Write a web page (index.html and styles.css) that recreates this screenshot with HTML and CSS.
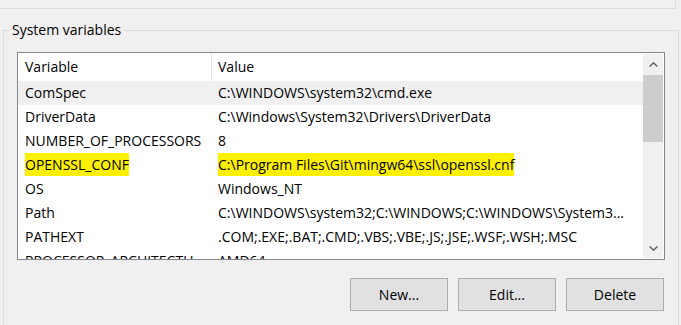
FILE: index.html
```html
<!DOCTYPE html>
<html>
<head>
<meta charset="utf-8">
<link rel="stylesheet" href="styles.css">
</head>
<body>
<div class="prev"></div>
<section class="group">
  <div class="group-title"><span>System variables</span></div>
  <div class="listbox">
    <div class="list">
      <div class="row header"><div class="c1">Variable</div><div class="c2">Value</div></div>
      <div class="row hover"><div class="c1">ComSpec</div><div class="c2">C:\WINDOWS\system32\cmd.exe</div></div>
      <div class="row"><div class="c1">DriverData</div><div class="c2">C:\Windows\System32\Drivers\DriverData</div></div>
      <div class="row"><div class="c1">NUMBER_OF_PROCESSORS</div><div class="c2">8</div></div>
      <div class="row"><div class="c1"><span class="mark mark-a">OPENSSL_CONF</span></div><div class="c2"><span class="mark mark-b">C:\Program Files\Git\mingw64\ssl\openssl.cnf</span></div></div>
      <div class="row"><div class="c1">OS</div><div class="c2">Windows_NT</div></div>
      <div class="row"><div class="c1">Path</div><div class="c2">C:\WINDOWS\system32;C:\WINDOWS;C:\WINDOWS\System3...</div></div>
      <div class="row"><div class="c1">PATHEXT</div><div class="c2">.COM;.EXE;.BAT;.CMD;.VBS;.VBE;.JS;.JSE;.WSF;.WSH;.MSC</div></div>
      <div class="row"><div class="c1">PROCESSOR_ARCHITECTU...</div><div class="c2">AMD64</div></div>
    </div>
    <div class="scrollbar">
      <div class="arrow"><svg width="9" height="5" viewBox="0 0 9 5"><polyline points="0.6,4.6 4.5,0.8 8.4,4.6" fill="none" stroke="#606060" stroke-width="1.4"/></svg></div>
      <div class="thumb"></div>
      <div class="track"></div>
      <div class="arrow"><svg width="9" height="5" viewBox="0 0 9 5"><polyline points="0.6,0.4 4.5,4.2 8.4,0.4" fill="none" stroke="#606060" stroke-width="1.4"/></svg></div>
    </div>
  </div>
  <div class="buttons">
    <button class="btn">New...</button>
    <button class="btn">Edit...</button>
    <button class="btn">Delete</button>
  </div>
</section>
</body>
</html>
```
FILE: styles.css
```css
html, body {
  margin: 0;
  padding: 0;
  background: #f0f0f0;
  overflow: hidden;
}
body {
  width: 681px;
  height: 325px;
  font-family: "Open Sans", "Noto Sans", sans-serif;
  font-size: 14px;
  color: #000;
}
.prev {
  box-sizing: border-box;
  width: 676px;
  height: 9px;
  border-right: 1px solid #dcdcdc;
  border-bottom: 1px solid #dcdcdc;
}
.group {
  box-sizing: border-box;
  margin: 21px 0 0 3px;
  width: 676px;
  height: 400px;
  border: 1px solid #dcdcdc;
  padding: 0 13px;
}
.group-title {
  margin: -11px 0 0 -7px;
  height: 32px;
  line-height: 20px;
}
.group-title span {
  background: #f0f0f0;
  padding: 0 2px;
}
.listbox {
  box-sizing: border-box;
  height: 208px;
  border: 1px solid #828790;
  background: #fff;
  display: flex;
  overflow: hidden;
}
.list {
  width: 625px;
  overflow: hidden;
}
.row {
  display: grid;
  grid-template-columns: 194px 1fr;
  height: 24px;
  line-height: 24px;
  white-space: nowrap;
}
.row.header {
  height: 28px;
  line-height: 28px;
}
.row.header .c1 {
  border-right: 1px solid #e5e5e5;
}
.row.hover {
  background: #f0f0f0;
}
.c1 {
  box-sizing: border-box;
  padding-left: 7px;
  overflow: hidden;
}
.c2 {
  padding-left: 6px;
  overflow: hidden;
}
.mark {
  background: #fff000;
  padding: 2px 0 2px;
}
.scrollbar {
  width: 20px;
  margin: 1px 1px 1px 0;
  background: #f0f0f0;
  display: flex;
  flex-direction: column;
}
.arrow {
  height: 20px;
  display: flex;
  align-items: center;
  justify-content: center;
}
.thumb {
  height: 67px;
  background: #cdcdcd;
  margin-top: 1px;
}
.track {
  flex: 1;
}
.buttons {
  display: flex;
  justify-content: flex-end;
  gap: 10px;
  margin-top: 18px;
  padding-right: 1px;
}
.btn {
  box-sizing: border-box;
  width: 98px;
  height: 33px;
  border: 1px solid #adadad;
  background: #e1e1e1;
  font-family: inherit;
  font-size: 14px;
  color: #000;
  padding: 0;
}
```
